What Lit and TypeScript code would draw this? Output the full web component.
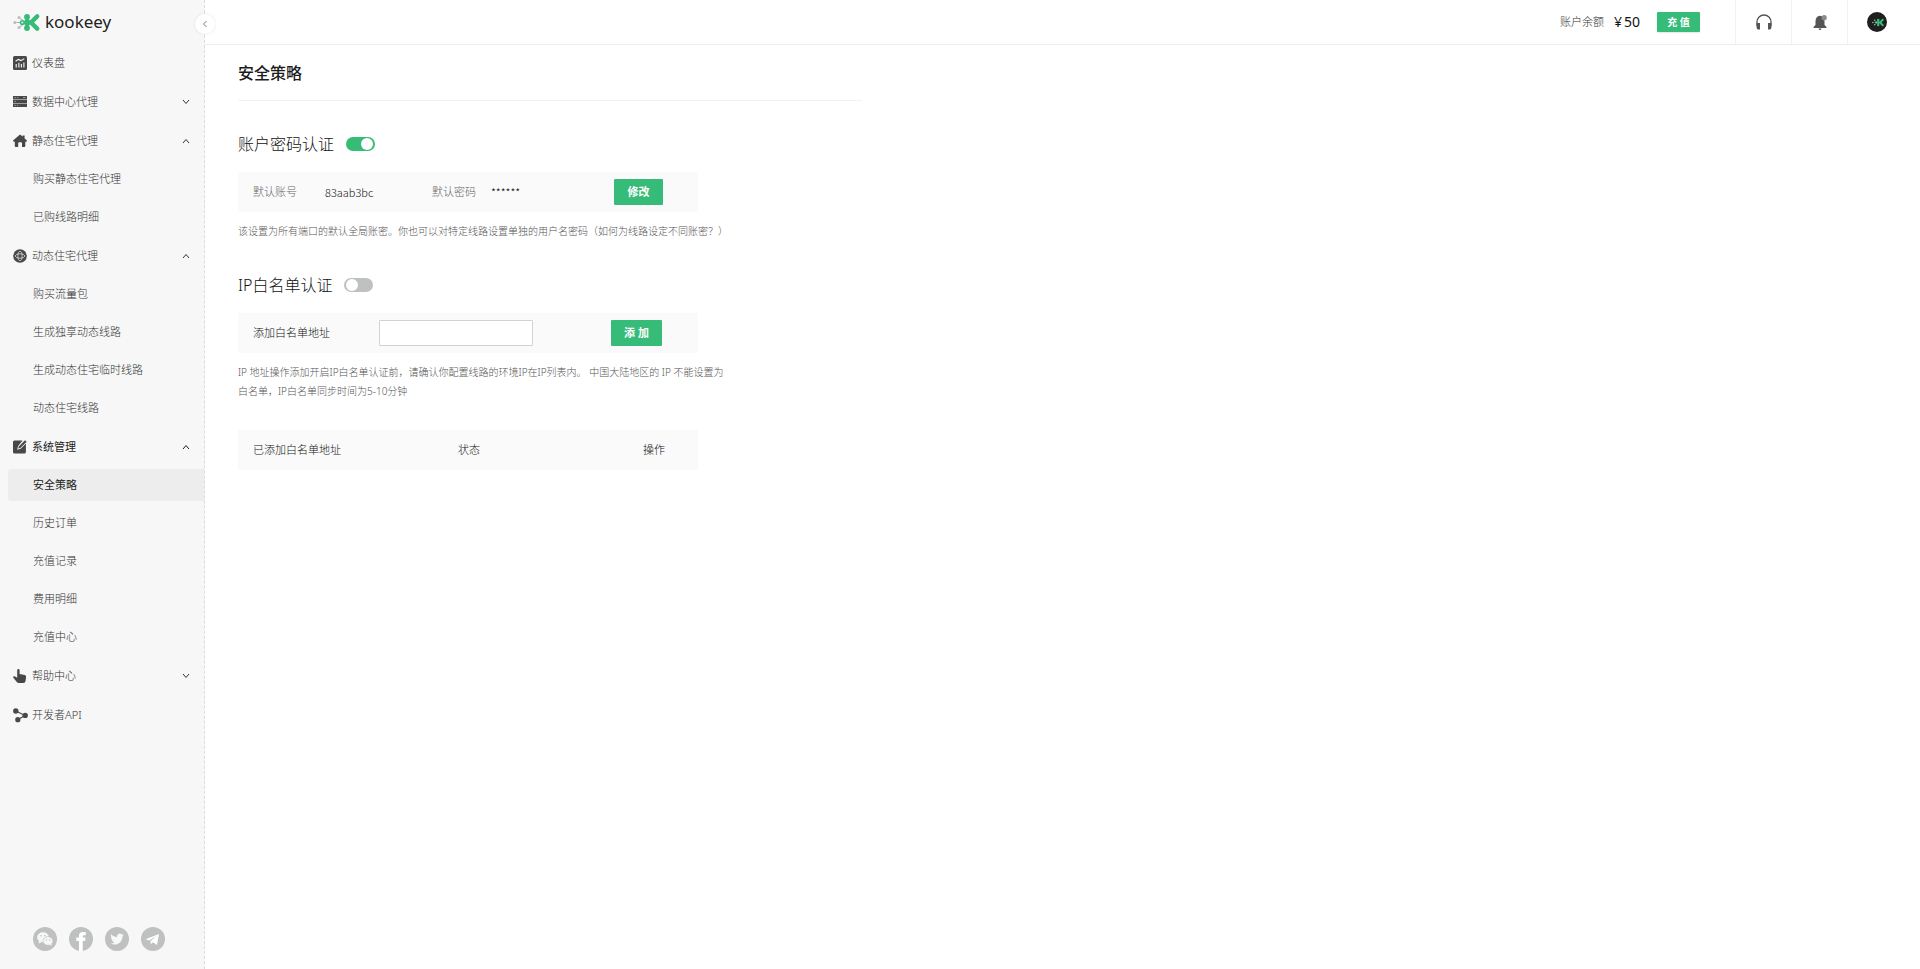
import { LitElement, html, css, svg, nothing } from "lit";
import { customElement, property, state } from "lit/decorators.js";
import { classMap } from "lit/directives/class-map.js";

interface MenuGroup {
  label: string;
  icon: string;
  open?: boolean;
  current?: boolean;
  children?: string[];
}

const MENU: MenuGroup[] = [
  { label: "仪表盘", icon: "dashboard" },
  { label: "数据中心代理", icon: "server", children: [] },
  { label: "静态住宅代理", icon: "home", open: true, children: ["购买静态住宅代理", "已购线路明细"] },
  {
    label: "动态住宅代理",
    icon: "globe",
    open: true,
    children: ["购买流量包", "生成独享动态线路", "生成动态住宅临时线路", "动态住宅线路"],
  },
  {
    label: "系统管理",
    icon: "edit",
    open: true,
    current: true,
    children: ["安全策略", "历史订单", "充值记录", "费用明细", "充值中心"],
  },
  { label: "帮助中心", icon: "hand", children: [] },
  { label: "开发者API", icon: "nodes" },
];

const GLYPHS: Record<string, unknown> = {
  dashboard: svg`<rect x="0" y="0" width="14" height="14" rx="1.5" fill="currentColor"/>
    <path d="M3.2 11.5V8M5.9 11.5V6.8M8.4 11.5V8M10.9 11.5V6.5M2.6 5.2 5.4 3.4 8 4.6 11.3 2.6" stroke="#f7f7f7" stroke-width="1.1" fill="none"/>`,
  server: svg`<path d="M0 1h14v3.400H0zM0 5h14v3.200H0zM0 8.800h14v3.200H0z" fill="currentColor"/>
    <path d="M1.5 2.6h1.4M4 2.6h1.2M1.5 6.6h1.4M1.5 10.4h1.4M10 2.6h2.6M4 10.4h1.2" stroke="#b5b5b5" stroke-width=".8"/>`,
  home: svg`<path d="M7 .4 9.6 2.6V1.6h2v2.8L14 6.6l-.8 1.3-.9-.5V12q0 1-1 1H9V9.3q0-1-1-1H6.200q-1 0-1 1V13H2.800q-1 0-1-1V7.400L.9 7.900 0 6.600Z" fill="currentColor"/>`,
  globe: svg`<circle cx="7" cy="7" r="6.8" fill="currentColor"/>
    <g stroke="#cfcfcf" stroke-width=".9" fill="none"><ellipse cx="7" cy="7" rx="2.100" ry="4.600"/><ellipse cx="7" cy="7" rx="4.600" ry="2.100"/></g>
    <circle cx="7" cy="7" r="1.300" fill="currentColor"/>`,
  edit: svg`<path d="M1.500.600h8L5 6.200 4.200 9.700l3.500-1L12.900 3.600V12q0 1.500-1.500 1.500h-9.900Q0 13.500 0 12V2.100Q0 .600 1.500.600Z" fill="currentColor"/>
    <path d="M12 .200 13.700 1.700 7.300 8 5.300 8.500 5.800 6.500Z" fill="currentColor"/>`,
  hand: svg`<path d="M4.200 1.200q0-1.200 1.200-1.200t1.200 1.200v3.700l5.200 1.200q1.400.4 1.300 1.700l-.5 4q-.2 2.200-2.400 2.200H5.800q-1.200 0-2-1L.3 8.800Q-.2 7.700.8 7.300q.9-.4 1.800.4l1.600 1Z" fill="currentColor"/>`,
  nodes: svg`<path d="M2.800 3 12 7.500 5 11.500" stroke="currentColor" stroke-width="1.200" fill="none"/>
    <circle cx="2.800" cy="3" r="2.700" fill="currentColor"/><circle cx="12.200" cy="7.400" r="2.700" fill="currentColor"/><circle cx="4.800" cy="11.700" r="2.600" fill="currentColor"/>`,
};

const SOCIAL: { name: string; art: unknown }[] = [
  {
    name: "微信",
    art: svg`<ellipse cx="10" cy="10.200" rx="5.800" ry="5" fill="#f7f7f7"/><path d="M6 13.500 5.600 16.500 9 15Z" fill="#f7f7f7"/>
      <ellipse cx="15" cy="14" rx="5" ry="4.300" fill="#f7f7f7" stroke="#bfc1c0" stroke-width=".7"/><path d="M16.500 17.600 18.600 18.800 18.400 16.500Z" fill="#f7f7f7"/>
      <g fill="#bfc1c0"><circle cx="8" cy="8.800" r=".8"/><circle cx="12" cy="8.800" r=".8"/><circle cx="13.400" cy="13" r=".7"/><circle cx="16.800" cy="13" r=".7"/></g>`,
  },
  {
    name: "Facebook",
    art: svg`<path d="M10 24V14H7.300V10.400H10V8.600Q10 5 13.700 5H16.700V8.300H14.800Q13.700 8.300 13.700 9.400V10.400H16.600L16.100 14H13.700V24Z" fill="#fff"/>`,
  },
  {
    name: "Twitter",
    art: svg`<path transform="translate(5.400 5.400) scale(.56)" d="M23.950 4.570a10 10 0 0 1-2.820.770 4.960 4.960 0 0 0 2.160-2.720 9.900 9.900 0 0 1-3.120 1.190 4.920 4.920 0 0 0-8.380 4.480C7.690 8.090 4.070 6.130 1.640 3.160a4.900 4.900 0 0 0 1.520 6.570 4.900 4.900 0 0 1-2.230-.610v.060a4.920 4.920 0 0 0 3.950 4.830 5 5 0 0 1-2.210.080 4.940 4.940 0 0 0 4.600 3.420A9.870 9.870 0 0 1 0 19.540a13.990 13.990 0 0 0 7.550 2.210c9.050 0 14-7.500 14-13.980l-.020-.640a9.900 9.900 0 0 0 2.420-2.560Z" fill="#f7f7f7"/>`,
  },
  {
    name: "Telegram",
    art: svg`<path d="M4.500 12.200 18 7 16 18 11.800 15.300 9.800 17.300 9.500 14.200 15.300 9 8.200 13.500Z" fill="#fff"/>`,
  },
];

const brandMark = svg`
  <g stroke="#9a9f9c" stroke-width=".8" fill="none"><path d="M2 8.500H9M6 3.500 10 6.500M6 13.500 10 10.500"/></g>
  <g fill="#b9bdbb"><circle cx="1.800" cy="8.500" r="1.500"/><circle cx="6" cy="3.400" r="1.500"/><circle cx="6" cy="13.600" r="1.500"/></g>
  <g fill="#37bb78"><circle cx="14" cy="3" r="2.900"/><circle cx="14" cy="14" r="2.900"/><path d="M10 8.500 14 3.500 19 8.500 14 13.500Z"/><circle cx="9.300" cy="8.500" r="2.600"/></g>
  <path d="M24.200 2.400 18 8.500 24.200 14.600" stroke="#37bb78" stroke-width="4.400" stroke-linecap="round" stroke-linejoin="round" fill="none"/>
  <circle cx="9.300" cy="8.500" r="1.100" fill="#c9efdb"/>`;

const resets = css`
  :host {
    box-sizing: border-box;
  }
  *,
  *::before,
  *::after {
    box-sizing: inherit;
  }
  button,
  input {
    font: inherit;
    color: inherit;
    margin: 0;
  }
  button {
    border: 0;
    padding: 0;
    background: none;
    cursor: pointer;
  }
  a {
    color: inherit;
    text-decoration: none;
  }
  svg {
    display: block;
    overflow: visible;
  }
`;

@customElement("side-menu")
export class SideMenu extends LitElement {
  @state() private groups = MENU.map((g) => ({ ...g }));

  static styles = [
    resets,
    css`
      :host {
        display: flex;
        flex-direction: column;
        position: relative;
        background: #f7f7f7;
        border-right: 1px dashed #dcdcdc;
        color: #333;
      }
      .brand {
        display: flex;
        align-items: center;
        gap: 5px;
        height: 44px;
        padding-left: 13px;
        color: #222;
        font-family: "Noto Sans", sans-serif;
        font-size: 17px;
        font-weight: 400;
      }
      .collapse {
        position: absolute;
        top: 14px;
        right: -11px;
        width: 20px;
        height: 20px;
        border-radius: 50%;
        background: #fff;
        box-shadow: 0 0 3px rgba(0, 0, 0, 0.1);
        display: grid;
        place-items: center;
        color: #777;
      }
      nav {
        display: flex;
        flex-direction: column;
        gap: 1px;
      }
      .group {
        display: flex;
        flex-direction: column;
      }
      .row {
        display: flex;
        align-items: center;
        width: 100%;
        height: 38px;
        padding: 0 14px 0 13px;
        gap: 5px;
        text-align: left;
      }
      .row .name {
        flex: 1;
        white-space: nowrap;
      }
      .glyph {
        width: 14px;
        height: 14px;
        color: #484848;
      }
      .group.current .row,
      .leaf.current {
        color: #1c1c1c;
        font-weight: 400;
      }
      .leaf {
        display: flex;
        align-items: center;
        height: 32px;
        margin: 3px 0 3px 8px;
        padding-left: 25px;
        border-radius: 3px 0 0 3px;
      }
      .leaf.current {
        background: #ededed;
      }
      .social {
        display: flex;
        gap: 12px;
        margin-top: auto;
        padding: 0 0 18px 33px;
      }
    `,
  ];

  private toggle(index: number) {
    this.groups = this.groups.map((g, i) => (i === index ? { ...g, open: !g.open } : g));
  }

  private head(group: MenuGroup, index: number) {
    const glyph = html`<svg class="glyph" viewBox="0 0 14 14" aria-hidden="true">${GLYPHS[group.icon]}</svg>
      <span class="name">${group.label}</span>`;
    if (!group.children) return html`<a class="row" href="#">${glyph}</a>`;
    return html`<button class="row" aria-expanded=${group.open ? "true" : "false"} @click=${() => this.toggle(index)}>
      ${glyph}
      <svg width="8" height="8" viewBox="0 0 8 8" fill="none" stroke="currentColor" stroke-width="1" aria-hidden="true">
        <path d=${group.open ? "M1 6 4 2.500 7 6" : "M1 2 4 5.500 7 2"} />
      </svg>
    </button>`;
  }

  render() {
    return html`
      <a class="brand" href="#"><svg width="27" height="17" viewBox="0 0 27 17" aria-hidden="true">${brandMark}</svg>kookeey</a>
      <button class="collapse" aria-label="收起菜单">
        <svg width="8" height="8" viewBox="0 0 8 8" fill="none" stroke="currentColor"><path d="M5.500 1 2.500 4 5.500 7" /></svg>
      </button>
      <nav>
        ${this.groups.map(
          (g, i) => html`<div class=${classMap({ group: true, current: !!g.current })}>
            ${this.head(g, i)}
            ${g.open
              ? g.children?.map(
                  (c) => html`<a class=${classMap({ leaf: true, current: !!g.current && c === "安全策略" })} href="#">${c}</a>`
                )
              : nothing}
          </div>`
        )}
      </nav>
      <div class="social">
        ${SOCIAL.map(
          (s) => html`<a href="#" aria-label=${s.name}
            ><svg width="24" height="24" viewBox="0 0 24 24"><circle cx="12" cy="12" r="12" fill="#bfc1c0" />${s.art}</svg></a
          >`
        )}
      </div>
    `;
  }
}

@customElement("top-bar")
export class TopBar extends LitElement {
  @property() balance = "50";

  static styles = [
    resets,
    css`
      :host {
        display: flex;
        justify-content: flex-end;
        align-items: stretch;
        height: 45px;
        border-bottom: 1px solid #ececec;
      }
      .wallet {
        display: flex;
        align-items: center;
        padding-right: 35px;
        color: #333;
      }
      .amount {
        display: flex;
        gap: 2px;
        margin: 0 17px 0 10px;
        font-size: 14px;
        font-weight: 400;
        color: #111;
      }
      .recharge {
        width: 43px;
        height: 20px;
        border-radius: 1px;
        background: #37bb78;
        color: #fff;
        font-size: 10px;
        font-weight: 700;
        box-shadow: 0 1px 2px rgba(0, 0, 0, 0.1);
      }
      .tool {
        display: grid;
        place-items: center;
        width: 56px;
        border-left: 1px solid #f2f2f2;
        color: #555;
      }
      .avatar {
        width: 73px;
        padding-right: 14px;
      }
    `,
  ];

  render() {
    return html`
      <div class="wallet">
        <span>账户余额</span><span class="amount"><span>¥</span><span>${this.balance}</span></span>
        <button class="recharge">充 值</button>
      </div>
      <button class="tool" aria-label="客服">
        <svg width="16" height="16" viewBox="0 0 16 16">
          <path d="M1 12V8a7 7 0 0 1 14 0v4" fill="none" stroke="currentColor" stroke-width="1.300" />
          <path d="M.6 9H4v6.500H2Q.6 15 .6 13.500ZM15.400 9H12v6.500h2q1.400-.5 1.400-2Z" fill="currentColor" />
        </svg>
      </button>
      <button class="tool" aria-label="通知">
        <svg width="14" height="15" viewBox="0 0 14 15">
          <path d="M7 .8Q11.500 1.500 11.500 6.500V10L13.500 12V13H.500V12L2.500 10V6.500Q2.500 1.500 7 .8ZM5.500 13.500H8.500Q8.300 15 7 15T5.500 13.500Z" fill="currentColor" />
          <circle cx="11.200" cy="2.700" r="2.600" fill="#8b8b8b" />
        </svg>
      </button>
      <button class="tool avatar" aria-label="账户">
        <svg width="20" height="20" viewBox="0 0 20 20">
          <circle cx="10" cy="10" r="10" fill="#1f1f1f" />
          <svg x="5" y="6" width="12" height="9" viewBox="0 0 27 17">${brandMark}</svg>
        </svg>
      </button>
    `;
  }
}

@customElement("security-policy")
export class SecurityPolicy extends LitElement {
  static styles = [
    resets,
    css`
      :host {
        display: block;
        max-width: 657px;
        padding: 0 0 24px 33px;
      }
      h1,
      h2,
      p {
        margin: 0;
      }
      h1 {
        height: 56px;
        line-height: 56px;
        border-bottom: 1px solid #f2f2f2;
        font-size: 16px;
        font-weight: 500;
        color: #1c1c1c;
      }
      .head {
        display: flex;
        align-items: center;
        gap: 12px;
        height: 24px;
        margin-bottom: 16px;
      }
      .account {
        margin-top: 31px;
      }
      .whitelist {
        margin-top: 32px;
      }
      h2 {
        font-size: 16px;
        font-weight: 300;
        color: #111;
      }
      .switch {
        appearance: none;
        width: 29px;
        height: 14px;
        padding: 1px 2px;
        border-radius: 7px;
        background: #bfc1c0;
        display: flex;
        cursor: pointer;
      }
      .switch::before {
        content: "";
        width: 12px;
        height: 12px;
        border-radius: 50%;
        background: #fff;
      }
      .switch:checked {
        background: #37bb78;
        justify-content: flex-end;
      }
      .panel {
        display: grid;
        align-items: center;
        max-width: 460px;
        height: 40px;
        padding-left: 15px;
        background: #fafafa;
        color: #111;
      }
      .credentials {
        grid-template-columns: 72px 107px 59px 123px 49px;
      }
      .entry {
        grid-template-columns: 126px 154px 1fr 51px;
        padding-right: 36px;
      }
      .entry button {
        grid-column: 4;
      }
      .muted {
        color: #666;
      }
      .value {
        font-family: "Noto Sans CJK SC", sans-serif;
      }
      .panel input {
        width: 100%;
        height: 26px;
        padding: 0 8px;
        border: 1px solid #d2d2d2;
        border-radius: 1px;
        background: #fff;
      }
      .action {
        height: 26px;
        border-radius: 1px;
        background: #37bb78;
        color: #fff;
        font-weight: 700;
      }
      .note {
        max-width: 490px;
        margin-top: 10px;
        font-size: 10px;
        line-height: 19px;
        color: #555;
      }
      table {
        width: 100%;
        max-width: 460px;
        margin-top: 29px;
        border-collapse: collapse;
        table-layout: fixed;
        background: #fafafa;
        color: #111;
      }
      th {
        height: 40px;
        padding: 0;
        font-weight: 300;
        text-align: left;
      }
      .address {
        width: 220px;
        padding-left: 15px;
      }
      .status {
        width: 185px;
      }
    `,
  ];

  render() {
    return html`
      <h1>安全策略</h1>
      <section class="account">
        <div class="head">
          <h2><label for="by-password">账户密码认证</label></h2>
          <input class="switch" id="by-password" type="checkbox" role="switch" checked />
        </div>
        <div class="panel credentials">
          <span class="muted">默认账号</span><span class="value">83aab3bc</span>
          <span class="muted">默认密码</span><span class="value">******</span>
          <button class="action">修改</button>
        </div>
        <p class="note">该设置为所有端口的默认全局账密。你也可以对特定线路设置单独的用户名密码（如何为线路设定不同账密？）</p>
      </section>
      <section class="whitelist">
        <div class="head">
          <h2><label for="by-ip">IP白名单认证</label></h2>
          <input class="switch" id="by-ip" type="checkbox" role="switch" />
        </div>
        <div class="panel entry">
          <label for="address">添加白名单地址</label>
          <input id="address" type="text" />
          <button class="action">添 加</button>
        </div>
        <p class="note">
          IP 地址操作添加开启IP白名单认证前，请确认你配置线路的环境IP在IP列表内。 中国大陆地区的 IP 不能设置为白名单，IP白名单同步时间为5-10分钟
        </p>
        <table>
          <thead>
            <tr>
              <th class="address" scope="col">已添加白名单地址</th>
              <th class="status" scope="col">状态</th>
              <th scope="col">操作</th>
            </tr>
          </thead>
        </table>
      </section>
    `;
  }
}

@customElement("app-root")
export class AppRoot extends LitElement {
  static styles = [
    resets,
    css`
      :host {
        display: grid;
        grid-template-columns: 205px 1fr;
        min-height: 100vh;
        background: #fff;
        color: #333;
        font-family: "Noto Sans", "Noto Sans CJK SC", sans-serif;
        font-size: 11px;
        font-weight: 300;
        line-height: 16px;
      }
      side-menu {
        z-index: 1;
      }
    `,
  ];

  render() {
    return html`
      <side-menu></side-menu>
      <div>
        <top-bar></top-bar>
        <main><security-policy></security-policy></main>
      </div>
    `;
  }
}
